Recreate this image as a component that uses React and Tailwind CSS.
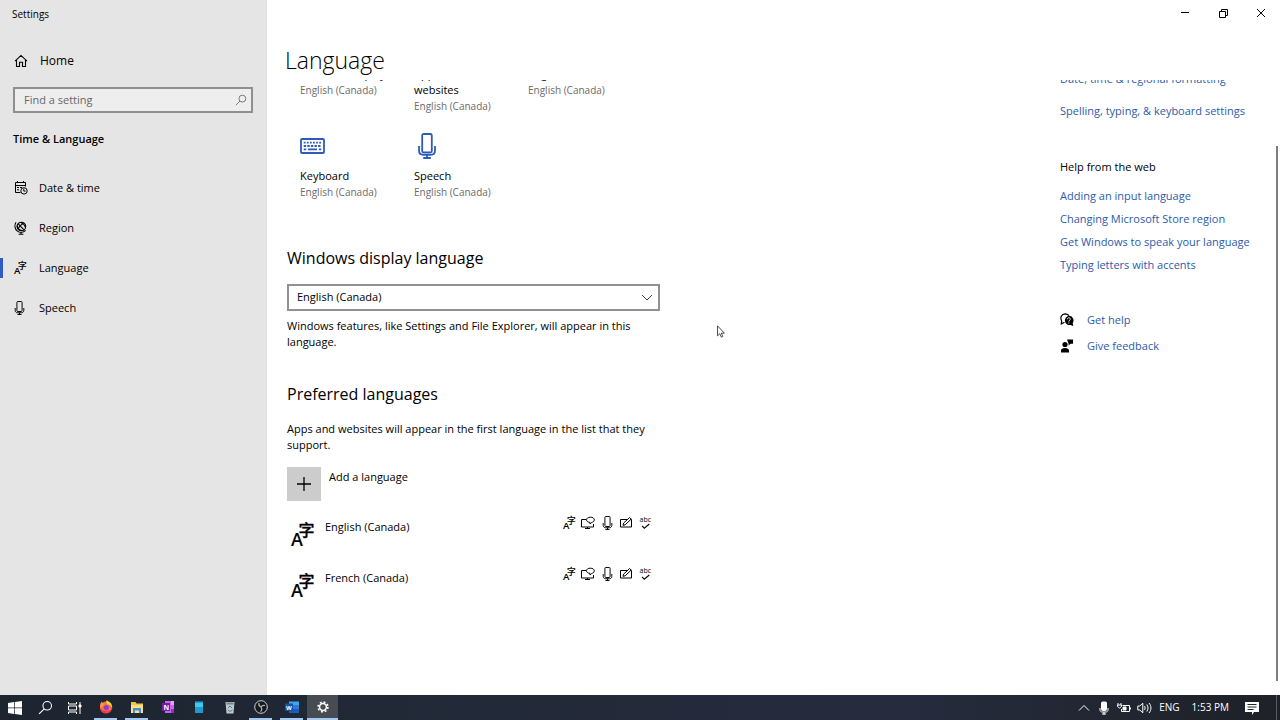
import React from "react";

const stroke = { fill: "none", stroke: "currentColor", strokeWidth: 1 };

function HomeIcon() {
  return (
    <svg viewBox="0 0 14 14" className="size-[14px]" {...stroke} strokeWidth="1.1" aria-hidden="true">
      <path d="M1 7.2 7 1.4l6 5.8M2.5 6v6.5h3V8.2h3v4.3h3V6" />
    </svg>
  );
}

function SearchIcon({ className }) {
  return (
    <svg viewBox="0 0 14 14" className={className} {...stroke} aria-hidden="true">
      <circle cx="8.6" cy="5.4" r="4" />
      <path d="M5.8 8.2 1 13" />
    </svg>
  );
}

function CalendarIcon() {
  return (
    <svg viewBox="0 0 14 14" className="size-[14px]" {...stroke} aria-hidden="true">
      <path d="M6.5 11.5H1.500V1.500h10v4M1.500 4.500h10M3.500 0v2M9.500 0v2M3 6.500h2M6 6.500h2M3 8.800h2" />
      <circle cx="10" cy="9.900" r="3.200" />
      <path d="M9.800 7.800v2.300h1.800" />
    </svg>
  );
}

function GlobeIcon() {
  return (
    <svg viewBox="0 0 14 14" className="size-[14px]" {...stroke} strokeWidth="1.100" aria-hidden="true">
      <circle cx="7.400" cy="5.500" r="4.300" />
      <path d="M2 1.200C.2 4 .6 8 3.400 10.100c2.500 1.900 6 1.500 8.200-.7M7 11v2M4.600 13.200h4.800M4.200 2.800l5.600 5.800M9.800 2.800C7.500 3 4.500 5.600 4.300 8.400M7 1.600c2 .5 4.200 2.700 4.100 4.800M3 4.600c.5 2.500 2.500 4.600 5 5" />
    </svg>
  );
}

function LanguageIcon({ className }) {
  return (
    <svg viewBox="0 0 24 26" className={className} fill="currentColor" overflow="visible" aria-hidden="true">
      <text x="0" y="24" fontSize="18" fontWeight="600" fontFamily="Open Sans, sans-serif">A</text>
      <text x="7.500" y="14" fontSize="16" fontWeight="500" stroke="currentColor" strokeWidth=".3" fontFamily="Noto Sans CJK SC, sans-serif">字</text>
    </svg>
  );
}

function MicIcon({ className }) {
  return (
    <svg viewBox="0 0 18 26" className={className} {...stroke} strokeWidth="1.800" aria-hidden="true">
      <rect x="4.200" y="1" width="9.600" height="18.500" rx="1.500" />
      <path d="M1 13v4.500c0 2.500 1.800 4.300 4.300 4.300h7.400c2.500 0 4.300-1.800 4.300-4.300V13M9 21.800V25M5.200 25h7.600" />
    </svg>
  );
}

function KeyboardIcon() {
  return (
    <svg viewBox="0 0 25 16" className="h-4 w-[25px]" {...stroke} strokeWidth="1.800" aria-hidden="true">
      <rect x="1" y="1" width="23" height="14" rx="1" />
      <path d="M3.700 4.600h18" strokeDasharray="1.800 1.300" />
      <path d="M3.700 8h18" strokeDasharray="2.400 1.200" />
      <path d="M3.700 11.400h2.500M8 11.400h9M18.800 11.400h2.500" />
    </svg>
  );
}

function DisplaySpeechIcon() {
  return (
    <svg viewBox="0 0 14 14" className="size-[14px]" {...stroke} aria-hidden="true">
      <path d="M5 3.500H.5v7.500h12V8M4 12.500h5M6.500 11v1.500" />
      <path d="M9.300 1.200c2.300 0 4 1 4 2.600S11.800 6.300 10.800 6.400L9 8V6.400C7 6.200 5.500 5.300 5.500 3.800s1.600-2.600 3.800-2.600z" />
    </svg>
  );
}

function HandwritingIcon() {
  return (
    <svg viewBox="0 0 14 14" className="size-[14px]" {...stroke} aria-hidden="true">
      <path d="M8 3.500H1.500v7.500h11V3.500h-1M4 9.300l.6-2.200 6-5.600 1.600 1.600-6 5.700z" />
    </svg>
  );
}

function SpellingIcon() {
  return (
    <svg viewBox="0 0 14 14" className="size-[14px]" overflow="visible" aria-hidden="true">
      <text x="1.500" y="6" fontSize="7" fontFamily="Open Sans, sans-serif" fill="currentColor">abc</text>
      <path d="M4 9.800l2.300 2.400 5-4.200" {...stroke} strokeWidth="1.100" />
    </svg>
  );
}

function HelpIcon() {
  return (
    <svg viewBox="0 0 14 14" className="size-[14px]" aria-hidden="true">
      <path d="M4.500 9.200 1.300 11l.4-3C-.3 4.500 1.500 1 5 .9c1.800 0 3 .6 4 1.700" {...stroke} strokeWidth="1.200" />
      <path d="M8.800 2.800a4.600 4.600 0 0 1 3.900 7.200l.6 3-2.900-1A4.600 4.600 0 1 1 8.800 2.800z" fill="currentColor" />
      <path d="M7.300 6.300c0-2 3-2 3-.2 0 1.200-1.500 1.200-1.500 2.500M8.800 9.500v1" fill="none" stroke="#fff" strokeWidth="1" />
    </svg>
  );
}

function FeedbackIcon() {
  return (
    <svg viewBox="0 0 14 14" className="size-[14px]" fill="currentColor" aria-hidden="true">
      <circle cx="5" cy="5.500" r="2.600" />
      <path d="M1 13.500v-1.800C1 9.800 2.500 9 5 9s4 .8 4 2.700v1.800zM7 .6h6v4.200h-2.400L8.600 6.600V4.800z" />
    </svg>
  );
}

const navItems = [
  { label: "Date & time", icon: <CalendarIcon /> },
  { label: "Region", icon: <GlobeIcon /> },
  { label: "Language", icon: <LanguageIcon className="h-[14px] w-[13px]" />, active: true },
  { label: "Speech", icon: <MicIcon className="h-[14px] w-[11px]" /> },
];

function Sidebar() {
  return (
    <aside className="w-[267px] shrink-0 bg-[#e5e5e5]">
      <div className="flex h-7 items-center pl-3 text-[10px]">Settings</div>
      <a href="#home" className="mt-[13px] flex h-10 items-center gap-3 pl-[14px] text-[12px]">
        <HomeIcon />
        Home
      </a>
      <div className="mr-[14px] ml-[13px] mt-1.5 flex h-[26px] items-center border-2 border-[#8f8f8f] bg-[#eeeeee] pr-1">
        <input
          type="text"
          aria-label="Find a setting"
          placeholder="Find a setting"
          className="min-w-0 flex-1 bg-transparent pl-[9px] text-[11px] outline-none placeholder:text-[#666]"
        />
        <SearchIcon className="size-3 text-[#666]" />
      </div>
      <h2 className="mt-4 h-5 pl-[13px] text-[11px] leading-5 font-semibold">Time &amp; Language</h2>
      <nav className="mt-[19px]">
        {navItems.map((item) => (
          <a key={item.label} href="#section" className="flex h-10 items-center text-[11px]">
            <span className={item.active ? "h-5 w-[3px] bg-[#2f5bc7]" : "h-5 w-[3px]"} />
            <span className="ml-[11px] flex w-[25px] items-center">{item.icon}</span>
            {item.label}
          </a>
        ))}
      </nav>
    </aside>
  );
}

function Tile({ icon, name }) {
  return (
    <div className="text-[11px] leading-4">
      {icon && <div className="mb-[10px] flex h-6 items-center text-[#2f5bb8]">{icon}</div>}
      <div>{name}</div>
      <div className="text-[10px] leading-4 text-[#6b6b6b]">English (Canada)</div>
    </div>
  );
}

function LanguageRow({ name }) {
  return (
    <li className="flex h-[51px] items-center pl-1">
      <LanguageIcon className="h-[26px] w-6" />
      <span className="mb-4 ml-[10px] flex-1 leading-4">{name}</span>
      <span className="mr-2 mb-6 flex items-center gap-[5px]">
        <LanguageIcon className="h-[14px] w-[13px]" />
        <DisplaySpeechIcon />
        <span className="flex w-[14px] justify-center"><MicIcon className="h-[14px] w-[11px]" /></span>
        <HandwritingIcon />
        <SpellingIcon />
      </span>
    </li>
  );
}

function LanguageSettings() {
  return (
    <section className="-mt-[14px] w-[373px] text-[11px]">
      <div className="ml-[13px] grid grid-cols-[114px_114px_114px] gap-y-5">
        <Tile name="Windows display" />
        <Tile name={<>Apps &amp;<br />websites</>} />
        <Tile name="Regional format" />
        <Tile name="Keyboard" icon={<KeyboardIcon />} />
        <Tile name="Speech" icon={<MicIcon className="ml-1 h-[26px] w-[18px]" />} />
      </div>
      <h2 className="mt-[46px] text-[16px] leading-6">
        <label htmlFor="display-language">Windows display language</label>
      </h2>
      <div className="relative mt-[14px]">
        <select
          id="display-language"
          className="block h-[27px] w-full appearance-none rounded-none border-2 border-[#919191] bg-white pl-2 text-[11px]"
        >
          <option>English (Canada)</option>
        </select>
        <svg viewBox="0 0 12 7" className="pointer-events-none absolute top-[10px] right-[7px] h-[7px] w-3 text-[#444]" {...stroke} aria-hidden="true">
          <path d="m1 1 5 5 5-5" />
        </svg>
      </div>
      <p className="mt-[7px] leading-4">
        Windows features, like Settings and File Explorer, will appear in this language.
      </p>
      <h2 className="mt-8 text-[16px] leading-6">Preferred languages</h2>
      <p className="mt-[15px] leading-4">
        Apps and websites will appear in the first language in the list that they support.
      </p>
      <button type="button" className="mt-[14px] flex gap-2">
        <span className="flex size-[34px] items-center justify-center bg-[#cccccc]">
          <svg viewBox="0 0 14 14" className="size-[14px]" {...stroke} strokeWidth="1.300" aria-hidden="true">
            <path d="M7 0v14M0 7h14" />
          </svg>
        </span>
        <span className="mt-0.5 leading-4">Add a language</span>
      </button>
      <ul className="mt-2">
        <LanguageRow name="English (Canada)" />
        <LanguageRow name="French (Canada)" />
      </ul>
    </section>
  );
}

const webLinks = [
  "Adding an input language",
  "Changing Microsoft Store region",
  "Get Windows to speak your language",
  "Typing letters with accents",
];

function RelatedLinks() {
  return (
    <aside className="-mt-[9px] w-[216px] shrink-0 text-[11px] whitespace-nowrap text-[#2b5bab]">
      <a href="#formatting" className="block leading-4">Date, time &amp; regional formatting</a>
      <a href="#typing" className="mt-4 block leading-4">Spelling, typing, &amp; keyboard settings</a>
      <h3 className="mt-10 leading-4 text-black">Help from the web</h3>
      <ul className="mt-[9px]">
        {webLinks.map((text) => (
          <li key={text}><a href="#help" className="block leading-[23px]">{text}</a></li>
        ))}
      </ul>
      <div className="mt-[31px]">
        <a href="#get-help" className="flex h-[26px] items-center gap-[13px]">
          <span className="text-black"><HelpIcon /></span>
          Get help
        </a>
        <a href="#feedback" className="flex h-[26px] items-center gap-[13px]">
          <span className="text-black"><FeedbackIcon /></span>
          Give feedback
        </a>
      </div>
    </aside>
  );
}

function WindowControls() {
  const shapes = [
    ["Minimize", "M1 4.500h8"],
    ["Restore", "M1.500 3.500h6v6h-6zM3.500 3.500v-2h6v6h-2"],
    ["Close", "m1 1 8 8M9 1 1 9"],
  ];
  return (
    <div className="flex h-[26px] justify-end">
      {shapes.map(([label, d]) => (
        <button key={label} type="button" aria-label={label} className="flex w-[38px] items-center justify-center">
          <svg viewBox="0 0 10 10" className="size-[10px]" {...stroke}><path d={d} /></svg>
        </button>
      ))}
    </div>
  );
}

const apps = [
  {
    name: "Firefox",
    running: true,
    icon: (
      <>
        <circle cx="7" cy="7.500" r="6" fill="#ff7139" />
        <path d="M7 .5c4 .5 6.700 4 6.200 8C12.500 5 10 4.500 8 4.500z" fill="#ffd83a" />
        <path d="M1 7.500C.8 4 2 2.500 3 1.500c0 1.500 1 2 2 2.500L3 7z" fill="#ff9640" />
        <path d="M1.200 8.500a6 6 0 0 0 11.600.3C11 11.500 5 12 1.200 8.500z" fill="#f5315e" />
        <circle cx="7.300" cy="7.500" r="2.600" fill="#8a3fd0" />
      </>
    ),
  },
  {
    name: "File Explorer",
    running: true,
    icon: (
      <>
        <path d="M1 2h4.500l1 1.500H13V13H1z" fill="#f5c542" />
        <path d="M1 5h12v8H1z" fill="#ffe08a" />
        <path d="M3 13V8h8v5H9v-2.500H5V13z" fill="#3f92d2" />
      </>
    ),
  },
  {
    name: "OneNote",
    icon: (
      <>
        <path d="M4 1h9v12H4z" fill="#ca64ea" />
        <path d="M10 1h3v4h-3z" fill="#e6a1f5" />
        <path d="M10 9h3v4h-3z" fill="#9332bf" />
        <path d="M1 3h8v8H1z" fill="#7719aa" />
        <text x="2.500" y="9.500" fontSize="7" fontWeight="700" fontFamily="Open Sans, sans-serif" fill="#fff">N</text>
      </>
    ),
  },
  {
    name: "Your Phone",
    icon: (
      <>
        <path d="M3 1h8v12H3z" fill="#1d9bd1" />
        <path d="M3 2h8v5H3z" fill="#41c9ec" />
        <path d="M3 1h8v1.500H3z" fill="#0f6da8" />
      </>
    ),
  },
  {
    name: "Recycle Bin",
    icon: (
      <>
        <path d="M2.500 2h9l-1 11.500h-7z" fill="#c3c7ca" />
        <path d="M3.500 2.500h7v2h-7z" fill="#7b8085" />
        <path d="m5 8 2-2 2 2M4.800 10l2.200 1.500L9.500 10" fill="none" stroke="#3787b5" />
      </>
    ),
  },
  {
    name: "OBS Studio",
    running: true,
    icon: (
      <>
        <circle cx="7" cy="7" r="6.300" fill="#17191f" stroke="#cfd2d6" />
        <path d="M5 3c-.5 2 .5 3.500 2 4M11 5.500C9.500 5 8 5.500 7 7M6.500 11.500C8 10.500 8 8.500 7 7" fill="none" stroke="#aeb2b8" strokeWidth="1.300" />
      </>
    ),
  },
  {
    name: "Word",
    running: true,
    icon: (
      <>
        <path d="M4 1.500h10v11H4z" fill="#41a5ee" />
        <path d="M4 5h10v4H4z" fill="#2b7cd3" />
        <path d="M4 9h10v3.500H4z" fill="#185abd" />
        <path d="M0 3.500h8v7.500H0z" fill="#1650a5" />
        <text x="1" y="9.500" fontSize="6" fontWeight="700" fontFamily="Open Sans, sans-serif" fill="#fff">W</text>
      </>
    ),
  },
  {
    name: "Settings",
    running: true,
    active: true,
    icon: (
      <g fill="none" stroke="#fff">
        <circle cx="7" cy="7" r="4.900" strokeWidth="1.600" strokeDasharray="1.900 1.948" />
        <circle cx="7" cy="7" r="3.400" strokeWidth="1.500" />
      </g>
    ),
  },
];

function Taskbar() {
  return (
    <footer className="flex h-[25px] shrink-0 bg-linear-to-r from-[#1d2530] from-0% via-[#262c3e] via-70% to-[#1e2128] text-white">
      <button type="button" aria-label="Start" className="flex w-[30px] items-center justify-center">
        <svg viewBox="0 0 14 14" className="size-[14px]" fill="#fff">
          <path d="M0 2l6.200-.9v5.500H0zM6.900 1 14 0v6.600H6.900zM0 7.300h6.200v5.600L0 12zM6.900 7.300H14V14l-7.100-1z" />
        </svg>
      </button>
      <button type="button" aria-label="Search" className="flex w-[30px] items-center justify-center">
        <SearchIcon className="size-[15px]" />
      </button>
      <button type="button" aria-label="Task View" className="flex w-[30px] items-center justify-center">
        <svg viewBox="0 0 14 14" className="size-[14px]" {...stroke}>
          <path d="M.5 1v2h8V1M.5 13v-2h8v2M.5 5h8v4h-8zM12 1v12" />
          <path d="M11 4h2v2h-2z" fill="currentColor" />
        </svg>
      </button>
      {apps.map((app) => (
        <button
          key={app.name}
          type="button"
          aria-label={app.name}
          className={
            app.active
              ? "flex w-[31px] flex-col items-center justify-between bg-[#474b52]"
              : "flex w-[31px] flex-col items-center justify-between"
          }
        >
          <svg viewBox="0 0 14 14" className="mt-[5px] size-[14px]">{app.icon}</svg>
          {app.running && (
            <span className={app.active ? "h-0.5 w-full bg-[#a5c8f0]" : "h-0.5 w-[23px] bg-[#a5c8f0]"} />
          )}
        </button>
      ))}
      <div className="ml-auto flex items-center text-[10px]">
        <svg viewBox="0 0 12 12" className="mr-2 size-3" {...stroke} aria-hidden="true"><path d="m1 8.500 5-5 5 5" /></svg>
        <svg viewBox="0 0 12 14" className="mr-[7px] h-[14px] w-3" {...stroke} aria-hidden="true">
          <rect x="3.500" y="1" width="5" height="8.500" rx="1" fill="currentColor" />
          <path d="M2 7v2c0 1 1 2 2 2h4c1 0 2-1 2-2V7M6 11v2.500M4 13h4" />
        </svg>
        <svg viewBox="0 0 14 12" className="mr-[6px] h-3 w-[14px]" {...stroke} aria-hidden="true">
          <path d="M5.500 3.500h7v6h-8V7M13.500 5.500v2M1 1v2M4 1v2M.5 3h4v1.500l-2 1.500-2-1.500z" />
          <path d="M6 5h3v3H6z" fill="currentColor" />
        </svg>
        <svg viewBox="0 0 15 12" className="mr-[7px] h-3 w-[15px]" {...stroke} aria-hidden="true">
          <path d="M.8 4h2l3-2.800v9.600L2.800 8h-2zM7.500 4c.8 1 .8 3 0 4M9.800 2.500c1.600 2 1.600 5 0 7M12 1c2.600 3 2.600 7 0 10" />
        </svg>
        <span className="mr-3">ENG</span>
        <span className="mr-4">1:53 PM</span>
        <button type="button" aria-label="Notifications" className="mr-[17px]">
          <svg viewBox="0 0 14 14" className="size-[14px]">
            <path d="M0 1h14v10H9l-2 3v-3H0z" fill="#fff" />
            <path d="M2.500 3.500h9M2.500 6h9M2.500 8.500h6" stroke="#22252d" />
          </svg>
        </button>
        <span className="mr-[3px] h-[25px] w-px bg-[#5a5d63]" />
      </div>
    </footer>
  );
}

export default function App() {
  return (
    <div className="relative flex h-screen flex-col overflow-hidden bg-white font-['Open_Sans','Noto_Sans',sans-serif] text-black">
      <div className="flex min-h-0 flex-1">
        <Sidebar />
        <main className="flex min-w-0 flex-1 flex-col">
          <WindowControls />
          <h1 className="mt-[18px] pl-[18px] text-[23px] leading-[32px] font-light">Language</h1>
          <div className="mt-1 flex min-h-0 flex-1 justify-between overflow-hidden pl-5">
            <LanguageSettings />
            <div className="flex">
              <RelatedLinks />
              <div className="mt-[66px] mr-0.5 mb-[14px] w-0.5 bg-[#7d7d7d]" />
            </div>
          </div>
        </main>
      </div>
      <Taskbar />
      <svg viewBox="0 0 8 13" className="absolute top-[325px] left-[717px] h-[13px] w-2" aria-hidden="true">
        <path d="M.5.8v10l2.300-2.100 1.500 3.500 1.500-.7-1.500-3.300h3.100z" fill="#fff" stroke="#222" strokeWidth=".8" />
      </svg>
    </div>
  );
}
